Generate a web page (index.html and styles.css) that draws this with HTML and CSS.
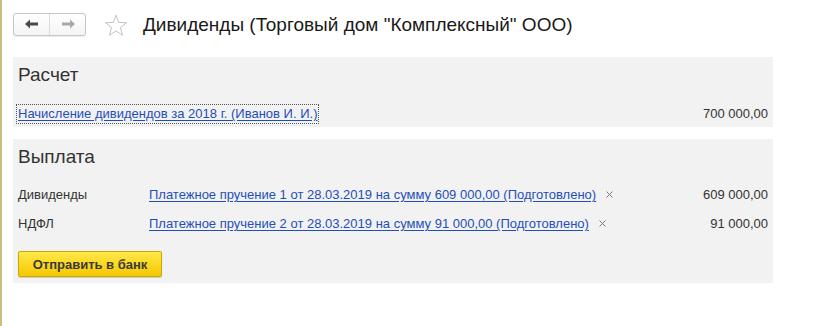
FILE: index.html
```html
<!DOCTYPE html>
<html lang="ru">
<head>
<meta charset="utf-8">
<link rel="stylesheet" href="styles.css">
</head>
<body>
<div class="page">
  <div class="header">
    <div class="nav">
      <div class="nav-btn">
        <svg width="14" height="10" viewBox="0 0 14 10"><path d="M0 5 L5 0.5 L5 3.5 L13 3.5 L13 6.5 L5 6.5 L5 9.5 Z" fill="#4a4a4a"/></svg>
      </div>
      <div class="nav-btn">
        <svg width="14" height="10" viewBox="0 0 14 10"><path d="M14 5 L9 0.5 L9 3.5 L1 3.5 L1 6.5 L9 6.5 L9 9.5 Z" fill="#a8a8a8"/></svg>
      </div>
    </div>
    <svg class="star" width="24" height="23" viewBox="0 0 24 23"><path d="M12 1.2 L14.7 8.4 L22.5 8.7 L16.4 13.6 L18.5 21.3 L12 16.9 L5.5 21.3 L7.6 13.6 L1.5 8.7 L9.3 8.4 Z" fill="none" stroke="#c4c4c4" stroke-width="1" stroke-linejoin="miter"/></svg>
    <h1 class="title">Дивиденды (Торговый дом "Комплексный" ООО)</h1>
  </div>

  <section class="panel panel-calc">
    <h2 class="panel-title">Расчет</h2>
    <div class="row row-calc">
      <a class="link focused" href="#">Начисление дивидендов за 2018 г. (Иванов И. И.)</a>
      <span class="amount">700 000,00</span>
    </div>
  </section>

  <section class="panel panel-pay">
    <h2 class="panel-title">Выплата</h2>
    <div class="row row-pay">
      <span class="label">Дивиденды</span>
      <a class="link" href="#">Платежное пручение 1 от 28.03.2019 на сумму 609 000,00 (Подготовлено)</a>
      <svg class="clear" width="7" height="7" viewBox="0 0 7 7"><path d="M0.5 0.5 L6.5 6.5 M6.5 0.5 L0.5 6.5" stroke="#7a7a7a" stroke-width="1"/></svg>
      <span class="amount">609 000,00</span>
    </div>
    <div class="row row-pay row-second">
      <span class="label">НДФЛ</span>
      <a class="link" href="#">Платежное пручение 2 от 28.03.2019 на сумму 91 000,00 (Подготовлено)</a>
      <svg class="clear" width="7" height="7" viewBox="0 0 7 7"><path d="M0.5 0.5 L6.5 6.5 M6.5 0.5 L0.5 6.5" stroke="#7a7a7a" stroke-width="1"/></svg>
      <span class="amount">91 000,00</span>
    </div>
    <div class="actions">
      <button class="btn-primary" type="button">Отправить в банк</button>
    </div>
  </section>
</div>
</body>
</html>
```

FILE: styles.css
```css
html, body {
  margin: 0;
  padding: 0;
  background: #ffffff;
}

body {
  font-family: Arial, "Liberation Sans", sans-serif;
  color: #333333;
  width: 830px;
  height: 326px;
  overflow: hidden;
}

.page {
  border-left: 2px solid #c9bd82;
  height: 326px;
  box-sizing: border-box;
  padding-left: 11px;
  padding-top: 12px;
}

.header {
  display: flex;
  align-items: center;
  height: 24px;
}

.nav {
  display: flex;
  width: 73px;
  height: 23px;
  box-sizing: border-box;
  border: 1px solid #c6c6c6;
  border-radius: 3px;
  background: linear-gradient(#ffffff, #f4f4f4);
  box-shadow: 0 1px 1px rgba(0,0,0,0.08);
}

.nav-btn {
  flex: 1;
  display: flex;
  align-items: center;
  justify-content: center;
}

.nav-btn + .nav-btn {
  border-left: 1px solid #dcdcdc;
}

.star {
  margin-left: 18px;
  margin-top: 3px;
}

.title {
  margin: 0 0 0 15px;
  font-size: 19px;
  font-weight: normal;
  color: #1a1a1a;
  line-height: 22px;
  padding-top: 2px;
}

.panel {
  width: 760px;
  background: #f2f2f2;
  box-sizing: border-box;
  padding: 7px 5px 0 5px;
}

.panel-calc {
  margin-top: 21px;
  height: 70px;
}

.panel-pay {
  margin-top: 12px;
  height: 144px;
}

.panel-title {
  margin: 0;
  font-size: 19px;
  font-weight: normal;
  line-height: 22px;
  color: #333333;
}

.row {
  display: flex;
  align-items: center;
  font-size: 13px;
  line-height: 16px;
}

.row-calc {
  margin-top: 20px;
}

.row-pay {
  margin-top: 19px;
}

.row-pay.row-second {
  margin-top: 13px;
}

.label {
  width: 131px;
  flex: none;
  color: #333333;
}

.link {
  color: #1f4fb8;
  text-decoration: underline;
  text-underline-offset: 2px;
}

.focused {
  outline: 1px dotted #555555;
  outline-offset: 1px;
}

.clear {
  margin-left: 10px;
  flex: none;
  position: relative;
  top: -1px;
}

.amount {
  margin-left: auto;
  color: #333333;
}

.actions {
  margin-top: 19px;
}

.btn-primary {
  display: block;
  width: 144px;
  height: 26px;
  padding: 0;
  border: 1px solid #c9a800;
  border-radius: 2px;
  background: linear-gradient(#ffe84a, #f5c800);
  color: #3a3a3a;
  font-family: Arial, "Liberation Sans", sans-serif;
  font-weight: bold;
  font-size: 13px;
  box-shadow: 0 1px 1px rgba(0,0,0,0.15);
}
```
